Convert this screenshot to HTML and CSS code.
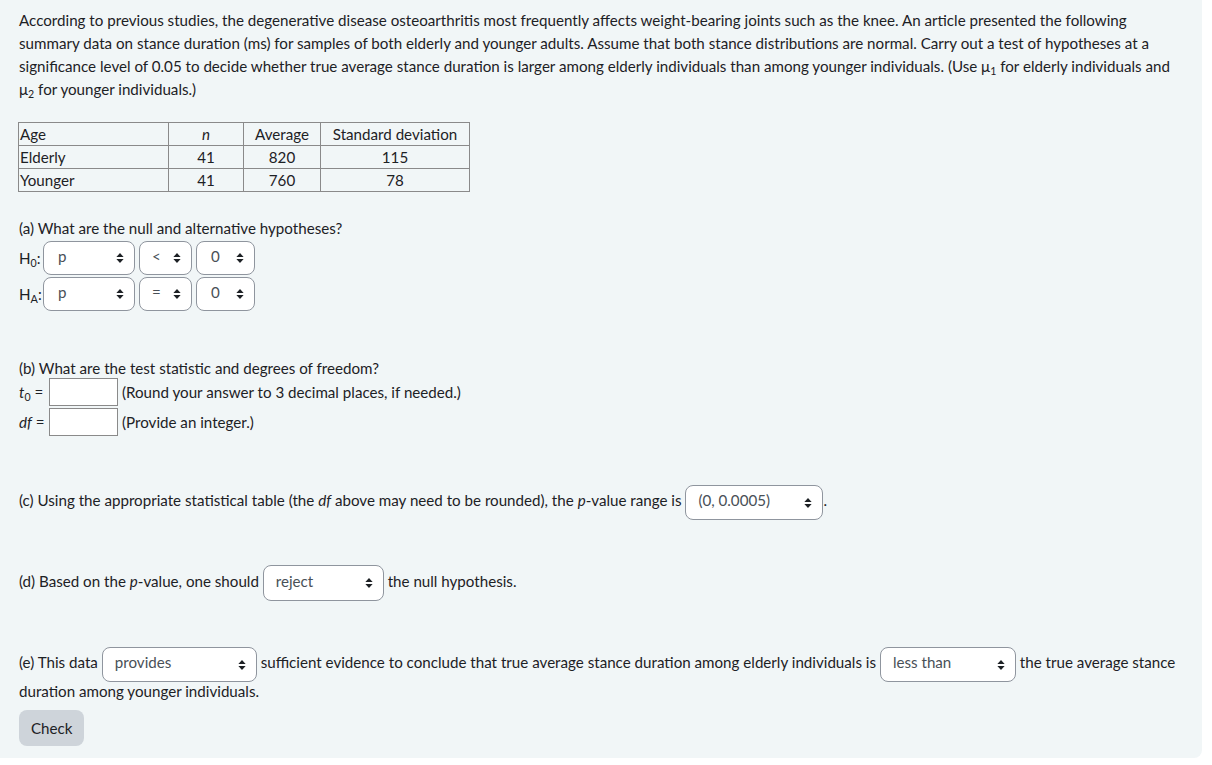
FILE: index.html
```html
<!DOCTYPE html>
<html>
  <head>
    <meta charset="UTF-8">
    <title>Stance duration - hypothesis test</title>
    <link rel="stylesheet" href="styles.css">
  </head>
<body>
<div class="que">
	<p class="intro">According to previous studies, the degenerative disease osteoarthritis most frequently affects weight-bearing joints such as the knee. An article presented the following summary data on stance duration (ms) for samples of both elderly and younger adults. Assume that both stance distributions are normal. Carry out a test of hypotheses at a significance level of 0.05 to decide whether true average stance duration is larger among elderly individuals than among younger individuals. (Use &mu;<sub class="s1">1</sub> for elderly individuals and &mu;<sub>2</sub> for younger individuals.)</p>

	<table class="data">
		<tr><td class="c-age">Age</td><td class="c-n"><i>n</i></td><td class="c-avg">Average</td><td class="c-sd">Standard deviation</td></tr>
		<tr><td>Elderly</td><td>41</td><td>820</td><td>115</td></tr>
		<tr><td>Younger</td><td>41</td><td>760</td><td>78</td></tr>
	</table>

	<p class="part pa">(a) What are the null and alternative hypotheses?</p>
	<div class="hyp">
		<span class="hlabel">H<sub>0</sub>:</span>
		<span class="sel w-par"><span>p</span><svg class="arr" viewBox="0 0 8 11"><path d="M0 4.5L4 0L8 4.5Z M0 6.5L4 11L8 6.5Z"/></svg></span>
		<span class="sel w-op"><span>&lt;</span><svg class="arr" viewBox="0 0 8 11"><path d="M0 4.5L4 0L8 4.5Z M0 6.5L4 11L8 6.5Z"/></svg></span>
		<span class="sel w-val"><span>0</span><svg class="arr" viewBox="0 0 8 11"><path d="M0 4.5L4 0L8 4.5Z M0 6.5L4 11L8 6.5Z"/></svg></span>
	</div>
	<div class="hyp">
		<span class="hlabel">H<sub class="sc">A</sub>:</span>
		<span class="sel w-par"><span>p</span><svg class="arr" viewBox="0 0 8 11"><path d="M0 4.5L4 0L8 4.5Z M0 6.5L4 11L8 6.5Z"/></svg></span>
		<span class="sel w-op"><span>=</span><svg class="arr" viewBox="0 0 8 11"><path d="M0 4.5L4 0L8 4.5Z M0 6.5L4 11L8 6.5Z"/></svg></span>
		<span class="sel w-val"><span>0</span><svg class="arr" viewBox="0 0 8 11"><path d="M0 4.5L4 0L8 4.5Z M0 6.5L4 11L8 6.5Z"/></svg></span>
	</div>

	<p class="part pb">(b) What are the test statistic and degrees of freedom?</p>
	<div class="ans first"><span class="alabel"><i>t</i><sub>0</sub> =</span><span class="box"></span>(Round your answer to 3 decimal places, if needed.)</div>
	<div class="ans"><span class="alabel"><i>df</i> =</span><span class="box"></span>(Provide an integer.)</div>

	<p class="part pc">(c) Using the appropriate statistical table (the <i>df</i> above may need to be rounded), the <i>p</i>-value range is <span class="sel w-range"><span>(0, 0.0005)</span><svg class="arr" viewBox="0 0 8 11"><path d="M0 4.5L4 0L8 4.5Z M0 6.5L4 11L8 6.5Z"/></svg></span>.</p>

	<p class="part pd">(d) Based on the <i>p</i>-value, one should <span class="sel w-rej"><span>reject</span><svg class="arr" viewBox="0 0 8 11"><path d="M0 4.5L4 0L8 4.5Z M0 6.5L4 11L8 6.5Z"/></svg></span> the null hypothesis.</p>

	<p class="part pe">(e) This data <span class="sel w-prov"><span>provides</span><svg class="arr" viewBox="0 0 8 11"><path d="M0 4.5L4 0L8 4.5Z M0 6.5L4 11L8 6.5Z"/></svg></span> sufficient evidence to conclude that true average stance duration among elderly individuals is <span class="sel w-less"><span>less than</span><svg class="arr" viewBox="0 0 8 11"><path d="M0 4.5L4 0L8 4.5Z M0 6.5L4 11L8 6.5Z"/></svg></span> the true average stance duration among younger individuals.</p>

	<button class="check">Check</button>
</div>
</body>
</html>
```

FILE: styles.css
```css
body{
	margin:0;
	background:#fff;
	font-family:"Lato","Liberation Sans",sans-serif;
	font-size:15.15px;
	color:#1d2125;
}
.que{
	width:1202px;
	box-sizing:border-box;
	background:#f1f6f7;
	border-radius:0 0 8px 0;
	padding:9px 26px 12px 19px;
	line-height:23px;
}
p{
	margin:0;
}
sub{
	font-size:0.7em;
	line-height:0;
	vertical-align:-0.25em;
}
sub.sc{
	font-size:0.72em;
}

/* data table */
.data{
	border-collapse:collapse;
	margin:21px 0 0 -1px;
	line-height:22px;
}
.data td{
	border:1px solid #8a8a8a;
	padding:0 1px;
	text-align:center;
}
.data td:first-child{
	text-align:left;
}
.c-age{width:147px;}
.c-n{width:72px;}
.c-avg{width:74px;}
.c-sd{width:146px;}

/* parts */
.pa{margin-top:25px;}
.pb{margin-top:46px;}
.pc{margin-top:46px;}
.pd{margin-top:41px;}
.pe{margin-top:46px;line-height:22px;}

.hyp{
	display:flex;
	align-items:center;
	gap:4px;
	margin-top:1px;
	height:34px;
}
.hyp + .hyp{margin-top:2px;}
.hlabel{
	width:20px;
}

/* fake selects */
.sel{
	display:inline-flex;
	align-items:center;
	justify-content:space-between;
	box-sizing:border-box;
	height:35px;
	padding:0 10px 5px 12px;
	background:#fff;
	border:1px solid #8f959e;
	border-radius:8px;
	color:#495057;
	vertical-align:middle;
	margin:2px 0;
	line-height:20px;
}
.sel .arr{margin-top:5px;}
.pe .sel{margin:-2px 0;}
.hyp .sel{height:34px;margin:0;}
.arr{
	width:8px;
	height:10px;
	fill:#1d2125;
}
.w-par{width:92px;padding-left:14px;}
.w-op{width:53px;}
.w-val{width:59px;padding-left:14px;}
.w-range{width:138px;}
.w-rej{width:121px;height:36px;}
.w-prov{width:155px;}
.w-less{width:136px;}

/* answer boxes */
.ans{
	display:flex;
	align-items:center;
	height:30px;
}
.ans.first{margin-top:-3px;}
.alabel{
	width:30px;
}
.box{
	display:inline-block;
	width:67px;
	height:26px;
	background:#fff;
	border:1px solid #8a8a8a;
	margin-right:4px;
}

.check{
	margin-top:8px;
	height:36px;
	padding:0 12px;
	border:none;
	border-radius:8px;
	background:#ced4da;
	color:#1d2125;
	font-family:inherit;
	font-size:15.15px;
}
```
